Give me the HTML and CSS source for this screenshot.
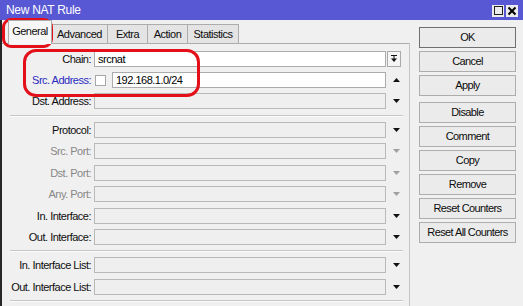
FILE: index.html
```html
<!DOCTYPE html>
<html>
<head>
<meta charset="utf-8">
<link rel="stylesheet" href="styles.css">
</head>
<body>
<div class="window">
  <div class="titlebar">
    <span class="title">New NAT Rule</span>
    <div class="tb-btns">
      <span class="tb-btn"><span class="max-icon"></span></span>
      <span class="tb-btn"><svg width="10" height="10" viewBox="0 0 10 10"><path d="M1.5 1.5 L8.5 8.5 M8.5 1.5 L1.5 8.5" stroke="#000" stroke-width="2"/></svg></span>
    </div>
  </div>
  <div class="main">
    <div class="left">
      <div class="tabs">
        <div class="tab active">General</div>
        <div class="tab">Advanced</div>
        <div class="tab">Extra</div>
        <div class="tab">Action</div>
        <div class="tab">Statistics</div>
      </div>
      <div class="panel">
        <div class="section">
          <div class="row">
            <span class="lbl">Chain:</span>
            <div class="field white">srcnat</div>
            <div class="ctl btnctl"><span class="dd-btn"><svg width="8" height="8" viewBox="0 0 8 8"><rect x="1" y="0" width="6" height="1" fill="#111"/><rect x="3.5" y="1" width="1" height="3" fill="#111"/><path d="M1 3.5H7L4 7Z" fill="#111"/></svg></span></div>
          </div>
          <div class="row">
            <span class="lbl blue">Src. Address:</span>
            <div class="combo"><span class="chk"></span><div class="field white">192.168.1.0/24</div></div>
            <div class="ctl"><svg width="7" height="4" viewBox="0 0 7 4"><path d="M0 4H7L3.5 0Z" fill="#111"/></svg></div>
          </div>
          <div class="row">
            <span class="lbl">Dst. Address:</span>
            <div class="field"></div>
            <div class="ctl"><svg width="7" height="4" viewBox="0 0 7 4"><path d="M0 0H7L3.5 4Z" fill="#111"/></svg></div>
          </div>
        </div>
        <div class="sep"></div>
        <div class="section mid">
          <div class="row">
            <span class="lbl">Protocol:</span>
            <div class="field"></div>
            <div class="ctl"><svg width="7" height="4" viewBox="0 0 7 4"><path d="M0 0H7L3.5 4Z" fill="#111"/></svg></div>
          </div>
          <div class="row">
            <span class="lbl gray">Src. Port:</span>
            <div class="field"></div>
            <div class="ctl"><svg width="7" height="4" viewBox="0 0 7 4"><path d="M0 0H7L3.5 4Z" fill="#a0a0a0"/></svg></div>
          </div>
          <div class="row">
            <span class="lbl gray">Dst. Port:</span>
            <div class="field"></div>
            <div class="ctl"><svg width="7" height="4" viewBox="0 0 7 4"><path d="M0 0H7L3.5 4Z" fill="#a0a0a0"/></svg></div>
          </div>
          <div class="row">
            <span class="lbl gray">Any. Port:</span>
            <div class="field"></div>
            <div class="ctl"><svg width="7" height="4" viewBox="0 0 7 4"><path d="M0 0H7L3.5 4Z" fill="#a0a0a0"/></svg></div>
          </div>
          <div class="row">
            <span class="lbl">In. Interface:</span>
            <div class="field"></div>
            <div class="ctl"><svg width="7" height="4" viewBox="0 0 7 4"><path d="M0 0H7L3.5 4Z" fill="#111"/></svg></div>
          </div>
          <div class="row">
            <span class="lbl">Out. Interface:</span>
            <div class="field"></div>
            <div class="ctl"><svg width="7" height="4" viewBox="0 0 7 4"><path d="M0 0H7L3.5 4Z" fill="#111"/></svg></div>
          </div>
        </div>
        <div class="sep tight"></div>
        <div class="section low">
          <div class="row">
            <span class="lbl">In. Interface List:</span>
            <div class="field"></div>
            <div class="ctl"><svg width="7" height="4" viewBox="0 0 7 4"><path d="M0 0H7L3.5 4Z" fill="#111"/></svg></div>
          </div>
          <div class="row">
            <span class="lbl">Out. Interface List:</span>
            <div class="field"></div>
            <div class="ctl"><svg width="7" height="4" viewBox="0 0 7 4"><path d="M0 0H7L3.5 4Z" fill="#111"/></svg></div>
          </div>
        </div>
        <div class="sep tight"></div>
      </div>
    </div>
    <div class="buttons">
      <div class="btn default">OK</div>
      <div class="btn">Cancel</div>
      <div class="btn">Apply</div>
      <div class="btn spaced">Disable</div>
      <div class="btn">Comment</div>
      <div class="btn">Copy</div>
      <div class="btn">Remove</div>
      <div class="btn">Reset Counters</div>
      <div class="btn">Reset All Counters</div>
    </div>
  </div>
  <div class="anno anno-tab"></div>
  <div class="anno anno-fields"></div>
</div>
</body>
</html>
```

FILE: styles.css
```css
* { box-sizing: border-box; }
body { margin: 0; background: #f0f0f0; }

.window {
  position: relative;
  width: 523px;
  height: 306px;
  overflow: hidden;
  background: #f0f0f0;
  font-family: "Liberation Sans", Arial, sans-serif;
  font-size: 11px;
  letter-spacing: -0.5px;
  color: #0d0d0d;
}

.titlebar {
  height: 20px;
  background: #5858d4;
  display: flex;
  align-items: center;
  justify-content: space-between;
  padding: 0 5px 0 6px;
}
.title { color: #fff; font-size: 12px; letter-spacing: -0.3px; }
.tb-btns { display: flex; gap: 2px; margin-top: 1px; }
.tb-btn {
  width: 12px;
  height: 12px;
  background: #ececec;
  display: flex;
  align-items: center;
  justify-content: center;
}
.max-icon { width: 9px; height: 9px; border: 1px solid #222; }

.main { display: flex; height: 286px; border-left: 2px solid #262626; }
.left { width: 408px; display: flex; flex-direction: column; }

.tabs {
  height: 25px;
  display: grid;
  grid-template-columns: 43px 56px 40px 40px 51px;
  align-items: end;
  padding-left: 6px;
}
.tab {
  height: 19px;
  border: 1px solid #acacac;
  border-bottom: none;
  margin-right: -1px;
  background: #e4e4e4;
  text-align: center;
  line-height: 18px;
  white-space: nowrap;
}
.tab.active {
  height: 24px;
  margin-bottom: -1px;
  background: #f7f7f7;
  position: relative;
  z-index: 1;
  line-height: 20px;
}

.panel {
  flex: 1;
  border-top: 1px solid #acacac;
  border-right: 1px solid #c4c4c4;
  padding-top: 7px;
}
.section { display: flex; flex-direction: column; gap: 5px; }
.section.mid { gap: 5.4px; }
.section.low { gap: 6px; }
.row {
  display: grid;
  grid-template-columns: 92px 292px 23px;
  height: 16px;
}
.lbl {
  text-align: right;
  padding-right: 3px;
  line-height: 16px;
  white-space: nowrap;
}
.lbl.blue { color: #2b2bbf; }
.lbl.gray { color: #878787; }

.field {
  height: 16px;
  border: 1px solid #b9b9b9;
  background: #efefef;
  padding: 0 3px;
  line-height: 14px;
  color: #000;
}
.field.white { background: #fff; border-color: #ababab; }

.combo { display: flex; align-items: center; }
.chk {
  flex: none;
  width: 11px;
  height: 11px;
  border: 1px solid #a8a8a8;
  background: #fff;
  margin-left: 1px;
  margin-right: 6px;
}
.combo .field { flex: 1; }

.ctl { display: flex; align-items: center; padding-left: 7px; }
.ctl.btnctl { padding-left: 1px; }
.dd-btn {
  width: 14px;
  height: 16px;
  border: 1px solid #a9a9a9;
  background: #f5f5f5;
  display: flex;
  align-items: center;
  justify-content: center;
}

.sep {
  height: 1px;
  background: #c6c6c6;
  box-shadow: 0 1px 0 #fbfbfb;
  margin: 6px 6px 6px 8px;
}
.sep.tight { margin-top: 5px; }

.buttons {
  width: 97px;
  margin-left: 9px;
  padding-top: 7px;
  display: flex;
  flex-direction: column;
  gap: 3px;
}
.btn {
  height: 21px;
  border: 1px solid #adadad;
  background: #ebebeb;
  text-align: center;
  line-height: 19px;
  color: #0d0d0d;
  letter-spacing: -0.6px;
  white-space: nowrap;
}
.btn.default { border-color: #6f6f6f; }
.btn.spaced { margin-top: 3px; }

.anno {
  position: absolute;
  border: 3px solid #e41019;
  pointer-events: none;
}
.anno-tab { left: 2px; top: 18px; width: 51px; height: 30px; border-radius: 9px; }
.anno-fields { left: 23px; top: 49px; width: 177px; height: 48px; border-radius: 13px; }
```
